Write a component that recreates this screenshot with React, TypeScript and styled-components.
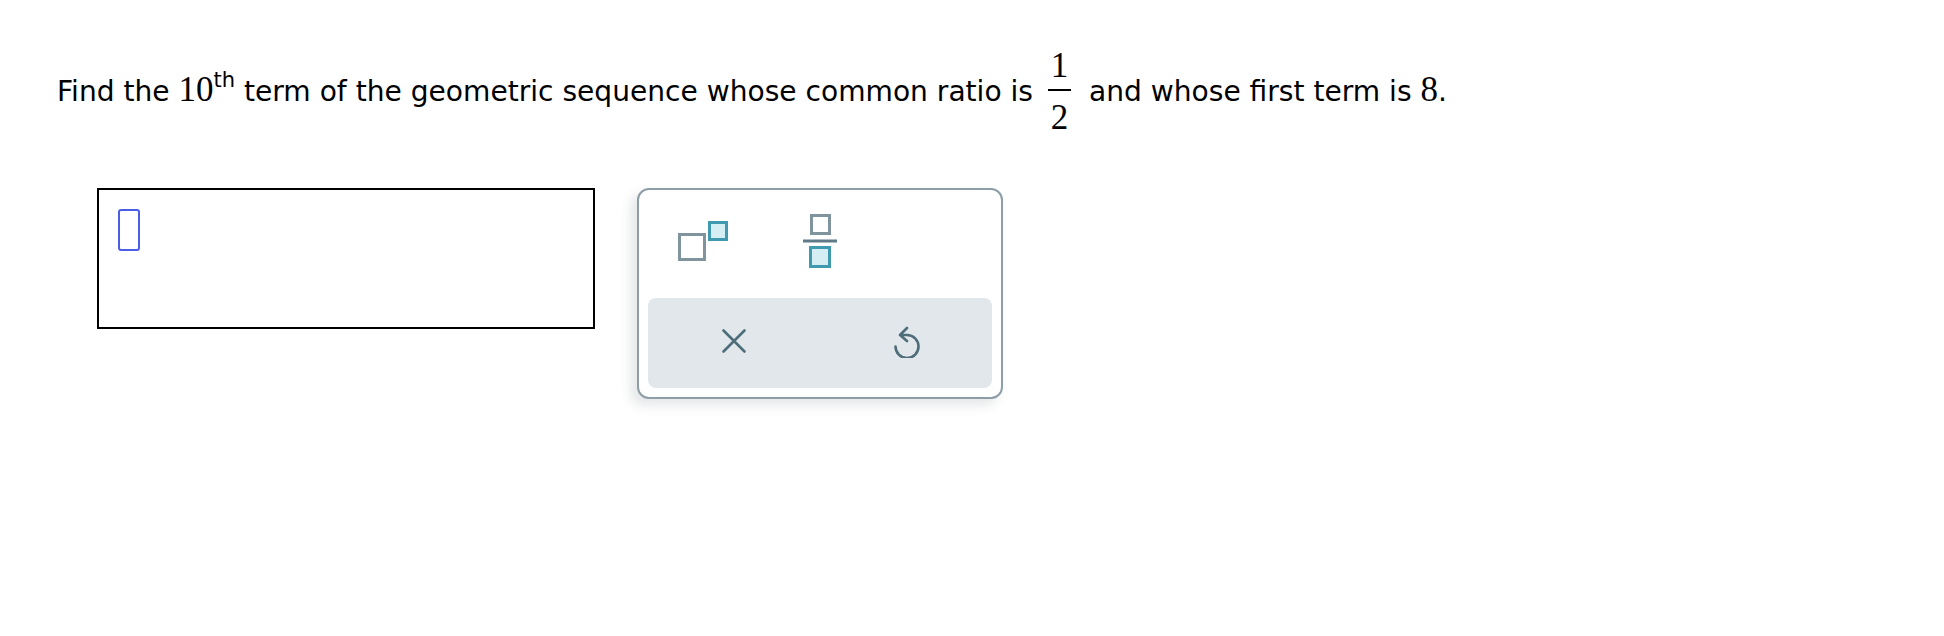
import React from "react";
import styled, { createGlobalStyle } from "styled-components";

const Global = createGlobalStyle`
  html, body { margin: 0; padding: 0; background: #ffffff; }
  body { font-family: "DejaVu Sans", Verdana, sans-serif; color: #000000; }
`;

const SERIF = `"Liberation Serif", "Times New Roman", Times, serif`;

const Page = styled.div`
  width: 1944px;
  height: 636px;
  box-sizing: border-box;
  padding: 53px 0 0 57px;
`;

const Question = styled.p`
  margin: 0;
  font-size: 28.1px;
  line-height: 40px;
  white-space: nowrap;
`;

const MathNum = styled.span`
  font-family: ${SERIF};
  font-size: 35px;
`;

const Sup = styled.span`
  font-size: 21px;
  position: relative;
  top: -14px;
`;

const Fraction = styled.span`
  display: inline-flex;
  flex-direction: column;
  align-items: center;
  vertical-align: 24px;
  margin: 0 18px 0 15px;
  font-family: ${SERIF};
  font-size: 35px;
`;

const FracPart = styled.span`
  line-height: 26px;
`;

const FracBar = styled.span`
  width: 23px;
  height: 2px;
  background: #000000;
  margin: 9.5px 0 14px;
`;

const AnswerRow = styled.div`
  display: flex;
  align-items: flex-start;
  gap: 42px;
  margin: 57px 0 0 40px;
`;

const AnswerBox = styled.div`
  width: 498px;
  height: 141px;
  box-sizing: border-box;
  border: 2px solid #000000;
  padding: 19px;
`;

const Caret = styled.div`
  width: 22px;
  height: 42px;
  box-sizing: border-box;
  border: 2.5px solid #4c5ee6;
  border-radius: 3px;
`;

const Keypad = styled.div`
  width: 366px;
  height: 211px;
  box-sizing: border-box;
  border: 2px solid #8d9ea6;
  border-radius: 12px;
  background: #ffffff;
  padding: 0 9px 9px;
  display: flex;
  flex-direction: column;
  box-shadow: -6px 6px 12px rgba(40, 60, 70, 0.13);
`;

const TemplateRow = styled.div`
  height: 108px;
  box-sizing: border-box;
  padding-bottom: 5px;
  display: grid;
  grid-template-columns: repeat(3, 1fr);
  align-items: center;
  justify-items: center;
`;

const KeyButton = styled.button<{ $shiftX?: number }>`
  border: none;
  background: transparent;
  padding: 0;
  display: flex;
  align-items: center;
  justify-content: center;
  cursor: pointer;
  transform: translateX(${(p) => p.$shiftX ?? 0}px);
`;

const ActionRow = styled.div`
  flex: 1;
  box-sizing: border-box;
  padding-bottom: 4px;
  display: grid;
  grid-template-columns: repeat(2, 1fr);
  align-items: center;
  justify-items: center;
  background: #e1e7ea;
  border-radius: 8px;
`;

const GRAY = "#7f949d";
const TEAL = "#3f9ab0";
const TEAL_FILL = "#d5eef4";
const ICON = "#4e6d7a";

const SuperscriptIcon = () => (
  <svg width="50" height="40" viewBox="0 0 50 40">
    <rect x="1.5" y="13.5" width="25" height="25" fill="#fff" stroke={GRAY} strokeWidth="3" />
    <rect x="31.5" y="1.5" width="17" height="17" fill={TEAL_FILL} stroke={TEAL} strokeWidth="3" />
  </svg>
);

const FractionIcon = () => (
  <svg width="34" height="54" viewBox="0 0 34 54">
    <rect x="8.5" y="1.5" width="18" height="18" fill="#fff" stroke={GRAY} strokeWidth="3" />
    <line x1="0" y1="27" x2="34" y2="27" stroke="#607b87" strokeWidth="3" />
    <rect x="7.5" y="33.5" width="19" height="19" fill={TEAL_FILL} stroke={TEAL} strokeWidth="3" />
  </svg>
);

const ClearIcon = () => (
  <svg width="26" height="26" viewBox="0 0 26 26">
    <path d="M2.5 2.5 L23.5 23.5 M23.5 2.5 L2.5 23.5" stroke={ICON} strokeWidth="2.6" strokeLinecap="round" fill="none" />
  </svg>
);

const UndoIcon = () => (
  <svg width="30" height="34" viewBox="0 0 30 34">
    <path
      d="M16 4 L9 11 L16 17 M9 11 H16 A11.5 11.5 0 1 1 4.5 22.5"
      stroke={ICON}
      strokeWidth="2.6"
      strokeLinecap="round"
      strokeLinejoin="round"
      fill="none"
    />
  </svg>
);

export default function App() {
  return (
    <>
      <Global />
      <Page>
        <Question>
          Find the <MathNum>10</MathNum>
          <Sup>th</Sup> term of the geometric sequence whose common ratio is
          <Fraction>
            <FracPart>1</FracPart>
            <FracBar />
            <FracPart>2</FracPart>
          </Fraction>
          and whose first term is <MathNum>8</MathNum>.
        </Question>
        <AnswerRow>
          <AnswerBox>
            <Caret />
          </AnswerBox>
          <Keypad>
            <TemplateRow>
              <KeyButton $shiftX={-2} aria-label="superscript">
                <SuperscriptIcon />
              </KeyButton>
              <KeyButton aria-label="fraction">
                <FractionIcon />
              </KeyButton>
            </TemplateRow>
            <ActionRow>
              <KeyButton aria-label="clear">
                <ClearIcon />
              </KeyButton>
              <KeyButton aria-label="undo">
                <UndoIcon />
              </KeyButton>
            </ActionRow>
          </Keypad>
        </AnswerRow>
      </Page>
    </>
  );
}
